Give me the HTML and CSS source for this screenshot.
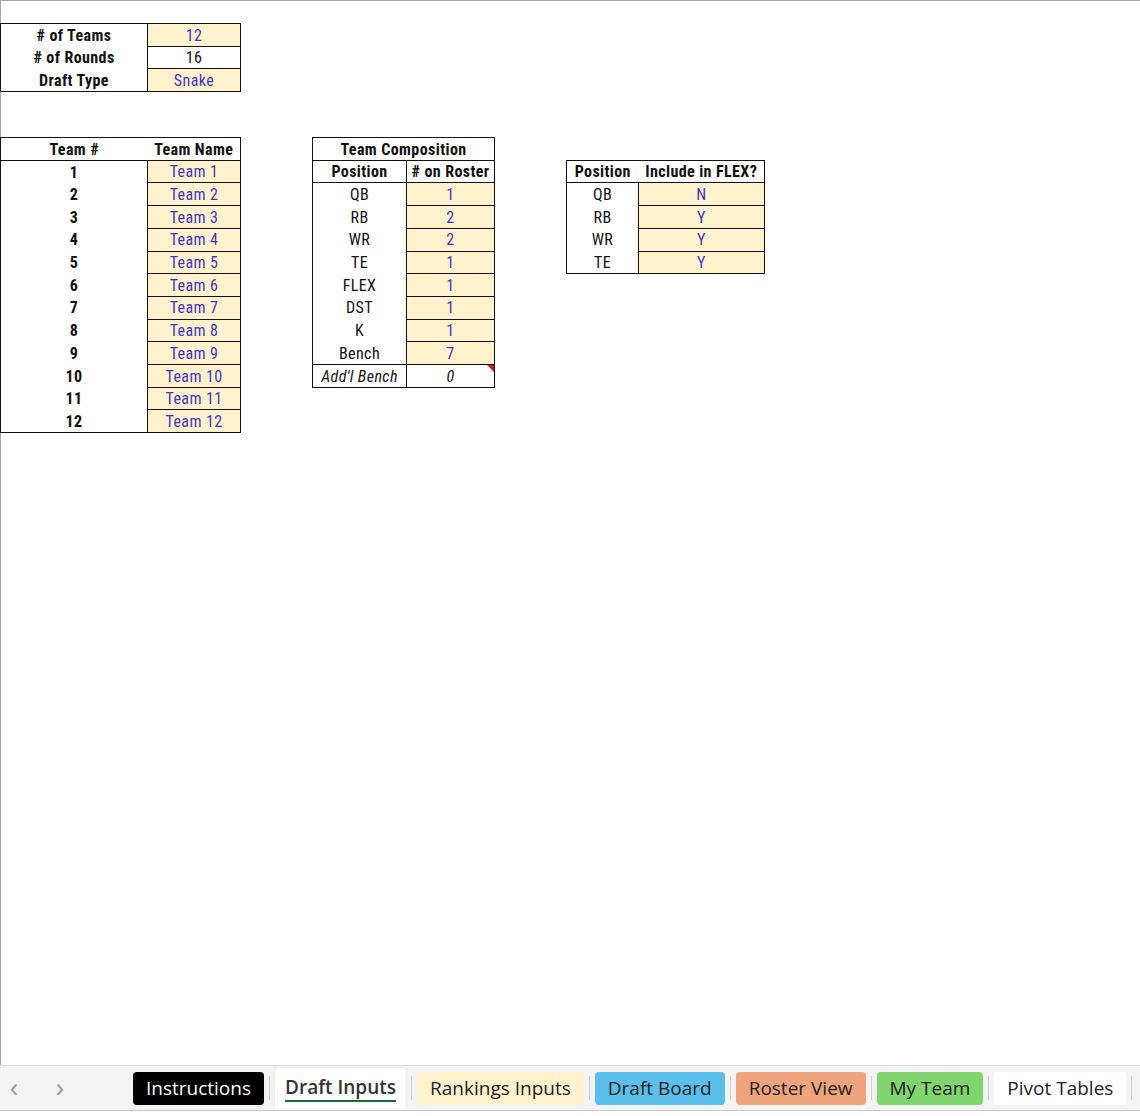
FILE: index.html
```html
<!DOCTYPE html>
<html lang="en">
<head>
    <meta charset="UTF-8">
    <title>Draft Inputs</title>
    <link rel="stylesheet" href="styles.css">
</head>
<body>
    <div class="sheet">
        <table class="grid settings">
            <tr><th>#&nbsp;of Teams</th><td class="input">12</td></tr>
            <tr><th>#&nbsp;of Rounds</th><td class="plain">16</td></tr>
            <tr><th>Draft Type</th><td class="input">Snake</td></tr>
        </table>

        <div class="tables">
            <table class="grid teams">
                <thead>
                    <tr><th>Team #</th><th>Team Name</th></tr>
                </thead>
                <tbody>
                    <tr><th>1</th><td class="input">Team 1</td></tr>
                    <tr><th>2</th><td class="input">Team 2</td></tr>
                    <tr><th>3</th><td class="input">Team 3</td></tr>
                    <tr><th>4</th><td class="input">Team 4</td></tr>
                    <tr><th>5</th><td class="input">Team 5</td></tr>
                    <tr><th>6</th><td class="input">Team 6</td></tr>
                    <tr><th>7</th><td class="input">Team 7</td></tr>
                    <tr><th>8</th><td class="input">Team 8</td></tr>
                    <tr><th>9</th><td class="input">Team 9</td></tr>
                    <tr><th>10</th><td class="input">Team 10</td></tr>
                    <tr><th>11</th><td class="input">Team 11</td></tr>
                    <tr><th>12</th><td class="input">Team 12</td></tr>
                </tbody>
            </table>

            <table class="grid composition">
                <thead>
                    <tr><th colspan="2" class="title">Team Composition</th></tr>
                    <tr><th class="divided">Position</th><th># on Roster</th></tr>
                </thead>
                <tbody>
                    <tr><td class="label">QB</td><td class="input">1</td></tr>
                    <tr><td class="label">RB</td><td class="input">2</td></tr>
                    <tr><td class="label">WR</td><td class="input">2</td></tr>
                    <tr><td class="label">TE</td><td class="input">1</td></tr>
                    <tr><td class="label">FLEX</td><td class="input">1</td></tr>
                    <tr><td class="label">DST</td><td class="input">1</td></tr>
                    <tr><td class="label">K</td><td class="input">1</td></tr>
                    <tr><td class="label">Bench</td><td class="input">7</td></tr>
                    <tr class="extra"><td class="label">Add'l Bench</td><td class="plain note">0</td></tr>
                </tbody>
            </table>

            <table class="grid flex">
                <thead>
                    <tr><th>Position</th><th>Include in FLEX?</th></tr>
                </thead>
                <tbody>
                    <tr><td class="label">QB</td><td class="input">N</td></tr>
                    <tr><td class="label">RB</td><td class="input">Y</td></tr>
                    <tr><td class="label">WR</td><td class="input">Y</td></tr>
                    <tr><td class="label">TE</td><td class="input">Y</td></tr>
                </tbody>
            </table>
        </div>
    </div>

    <div class="tabbar">
        <span class="nav">&lsaquo;</span>
        <span class="nav">&rsaquo;</span>
        <div class="tabs">
            <span class="tab black">Instructions</span>
            <span class="sep"></span>
            <span class="tab active">Draft Inputs</span>
            <span class="sep"></span>
            <span class="tab yellow">Rankings Inputs</span>
            <span class="sep"></span>
            <span class="tab blue">Draft Board</span>
            <span class="sep"></span>
            <span class="tab orange">Roster View</span>
            <span class="sep"></span>
            <span class="tab green">My Team</span>
            <span class="sep"></span>
            <span class="tab white">Pivot Tables</span>
            <span class="sep"></span>
        </div>
    </div>
</body>
</html>
```

FILE: styles.css
```css
body {
    margin: 0;
    background: #fff;
    font-family: "Liberation Sans Narrow", "Roboto Condensed", "Liberation Sans", sans-serif;
    font-size: 16px;
    letter-spacing: 0.4px;
    color: #111;
}
.sheet {
    height: 1065px;
    border-top: 1px solid #a8a8a8;
    border-left: 1px solid #a8a8a8;
    box-sizing: border-box;
    padding-top: 22px;
}
.grid {
    border-collapse: collapse;
    border: 1px solid #111;
    margin-left: -1px;
}
.grid th, .grid td {
    height: 20.2px;
    padding: 1.5px 0 0;
    text-align: center;
    line-height: 1;
    white-space: nowrap;
}
.grid th {
    font-weight: bold;
}
.grid thead tr {
    border-bottom: 1px solid #111;
}
.grid .input {
    background: #fff2cc;
    color: #3f36c0;
    border: 1px solid #111;
}
.grid .plain {
    border: 1px solid #111;
}
.settings th, .teams th {
    width: 146px;
}
.settings td, .teams td {
    width: 92px;
}
.settings th {
    border-right: 1px solid #111;
}
.tables {
    display: flex;
    align-items: flex-start;
    margin-top: 45px;
}
.teams thead th:last-child {
    width: 92px;
}
.composition {
    margin-left: 71px;
}
.composition th.divided {
    border-right: 1px solid #111;
}
.composition .label {
    width: 93px;
    border-right: 1px solid #111;
}
.composition td:last-child {
    width: 87px;
}
.composition .extra {
    border-top: 1px solid #111;
}
.composition .extra td {
    font-style: italic;
}
.note {
    position: relative;
}
.note::after {
    content: "";
    position: absolute;
    top: 0;
    right: 0;
    border-top: 7px solid #d01818;
    border-left: 7px solid transparent;
}
.flex {
    margin-left: 71px;
    margin-top: 22.7px;
}
.flex .label {
    width: 71px;
    border-right: 1px solid #111;
}
.flex td:last-child {
    width: 125px;
}
.tabbar {
    height: 46px;
    background: #f3f3f3;
    border-top: 1px solid #dedede;
    border-bottom: 1px solid #c9c9c9;
    box-sizing: border-box;
    display: flex;
    align-items: center;
    overflow: hidden;
    font-family: "Open Sans", "Noto Sans", sans-serif;
    font-size: 19px;
    letter-spacing: 0;
}
.nav {
    color: #9a9a9a;
    font-size: 28px;
    width: 46px;
    flex-shrink: 0;
    text-align: center;
    line-height: 1;
    margin-top: -4px;
}
.nav:first-child {
    margin-left: -9px;
}
.tabs {
    display: flex;
    align-items: center;
    margin-left: 50px;
    height: 100%;
}
.tab {
    flex-shrink: 0;
    white-space: nowrap;
    height: 33px;
    line-height: 33px;
    padding: 0 13px;
    border-radius: 4px;
    color: #222;
}
.sep {
    flex-shrink: 0;
    width: 1px;
    height: 24px;
    background: #d0d0d0;
    margin: 0 5px;
}
.tab.black {
    background: #000;
    color: #fff;
}
.tab.active {
    background: #fff;
    height: 42px;
    line-height: 38px;
    padding: 0 10px;
    font-weight: 600;
    color: #333;
    border-radius: 4px 4px 0 0;
    box-shadow: 0 0 2px rgba(0, 0, 0, 0.12);
    position: relative;
    margin-top: 2px;
}
.tab.active::after {
    content: "";
    position: absolute;
    left: 10px;
    right: 10px;
    bottom: 8px;
    height: 2px;
    background: #1e6b3a;
}
.tab.yellow {
    background: #fff2cc;
}
.tab.blue {
    background: #5bbfeb;
}
.tab.orange {
    background: #f0a47c;
}
.tab.green {
    background: #80d56f;
}
.tab.white {
    background: #fff;
}
```
